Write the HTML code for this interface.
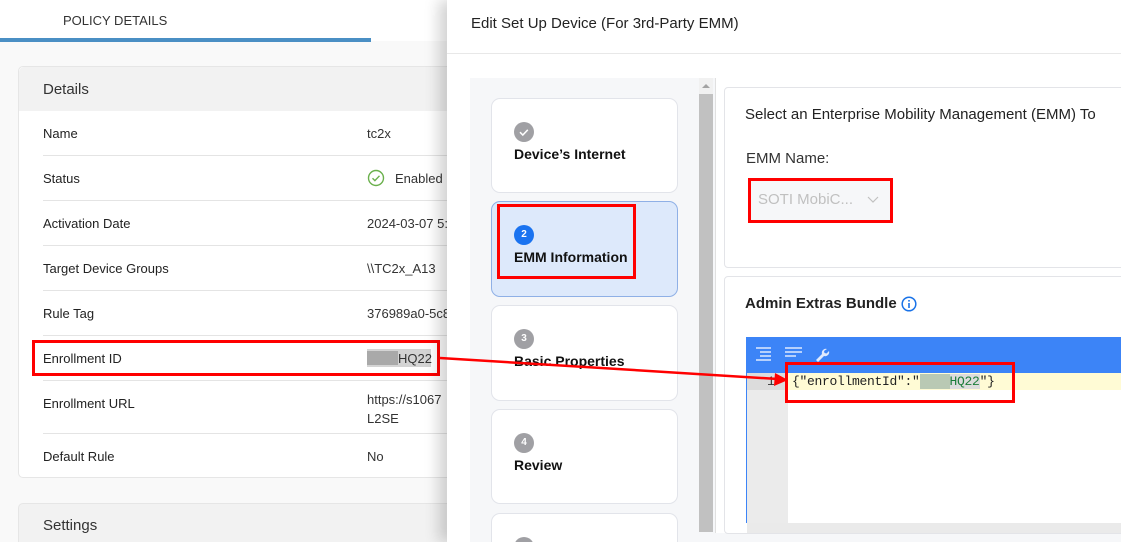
<!DOCTYPE html>
<html style="width:1121px;height:542px;overflow:hidden"><head><style>
*{margin:0;padding:0;box-sizing:border-box}
body{width:1121px;height:542px;overflow:hidden;position:relative;background:#f9f9f9;font-family:"Liberation Sans",sans-serif;color:#222}
.a{position:absolute}
.lab{position:absolute;left:43px;font-size:13px;color:#222}
.val{position:absolute;left:367px;font-size:13px;color:#333}
.sep{position:absolute;left:43px;width:404px;height:1px;background:#e4e4e4}
.step{position:absolute;left:491px;width:187px;background:#fff;border:1px solid #e2e4ea;border-radius:9px}
.num{position:absolute;left:22px;width:20px;height:20px;border-radius:50%;background:#a0a0a4;color:#fff;font-size:10px;font-weight:bold;text-align:center;line-height:20px}
.st{position:absolute;left:22px;font-size:14px;font-weight:bold;color:#111;white-space:nowrap}
.red{position:absolute;border:3px solid #f00}
</style></head><body>
<div class="a" style="left:0;top:0;width:447px;height:41px;background:#fff"></div>
<div class="a" style="left:63px;top:13px;font-size:13px;color:#333">POLICY DETAILS</div>
<div class="a" style="left:0;top:38px;width:371px;height:4px;background:#4a8fc4"></div>

<div class="a" style="left:18px;top:66px;width:440px;height:412px;background:#fff;border:1px solid #e6e6e6;border-radius:5px"></div>
<div class="a" style="left:19px;top:67px;width:438px;height:44px;background:#f2f2f2;border-radius:5px 5px 0 0"></div>
<div class="a" style="left:43px;top:81px;font-size:15px;color:#333">Details</div>
<div class="lab" style="top:126px">Name</div><div class="val" style="top:126px">tc2x</div>
<div class="sep" style="top:155px"></div>
<div class="lab" style="top:171px">Status</div>
<svg class="a" style="left:367px;top:169px" width="18" height="18"><circle cx="9" cy="9" r="7.5" fill="none" stroke="#6ab04c" stroke-width="1.4"/><path d="M5.5 9.2l2.4 2.4 4.6-4.8" fill="none" stroke="#6ab04c" stroke-width="1.4"/></svg>
<div class="val" style="top:171px;left:395px">Enabled</div>
<div class="sep" style="top:200px"></div>
<div class="lab" style="top:216px">Activation Date</div><div class="val" style="top:216px">2024-03-07 5:5</div>
<div class="sep" style="top:245px"></div>
<div class="lab" style="top:261px">Target Device Groups</div><div class="val" style="top:261px">\\TC2x_A13</div>
<div class="sep" style="top:290px"></div>
<div class="lab" style="top:306px">Rule Tag</div><div class="val" style="top:306px">376989a0-5c8</div>
<div class="sep" style="top:335px"></div>
<div class="lab" style="top:351px">Enrollment ID</div>
<div class="a" style="left:367px;top:349px;width:64px;height:18px;background:#d4d4d4"></div>
<div class="a" style="left:367px;top:351px;width:31px;height:14px;background:#a9a9a9"></div>
<div class="val" style="top:351px;left:398px">HQ22</div>
<div class="sep" style="top:380px"></div>
<div class="lab" style="top:396px">Enrollment URL</div><div class="val" style="top:390px;line-height:19px">https://s1067<br>L2SE</div>
<div class="sep" style="top:433px"></div>
<div class="lab" style="top:449px">Default Rule</div><div class="val" style="top:449px">No</div>
<div class="red" style="left:32px;top:340px;width:408px;height:36px"></div>

<div class="a" style="left:18px;top:503px;width:440px;height:39px;background:#f2f2f2;border:1px solid #e6e6e6;border-bottom:none;border-radius:5px 5px 0 0"></div>
<div class="a" style="left:43px;top:517px;font-size:15px;color:#333">Settings</div>

<div class="a" style="left:447px;top:0;width:674px;height:542px;background:#fff;box-shadow:-8px 0 14px rgba(0,0,0,.18)"></div>
<div class="a" style="left:471px;top:15px;font-size:15px;color:#222">Edit Set Up Device (For 3rd-Party EMM)</div>
<div class="a" style="left:447px;top:53px;width:674px;height:1px;background:#e8e8e8"></div>
<div class="a" style="left:470px;top:78px;width:651px;height:464px;background:#f6f7f9"></div>

<div class="step" style="top:98px;height:95px"><svg class="a" style="left:22px;top:23px" width="20" height="20"><circle cx="10" cy="10" r="10" fill="#a0a0a4"/><path d="M6 10.2l2.8 2.8 5-5.2" fill="none" stroke="#fff" stroke-width="1.5"/></svg><div class="st" style="top:47px">Device’s Internet</div></div>
<div class="step" style="top:201px;height:96px;background:#dde9fb;border-color:#8fb0e6"><div class="num" style="top:23px;background:#1a73f0">2</div><div class="st" style="top:47px">EMM Information</div></div>
<div class="step" style="top:305px;height:96px"><div class="num" style="top:23px">3</div><div class="st" style="top:47px">Basic Properties</div></div>
<div class="step" style="top:409px;height:95px"><div class="num" style="top:23px">4</div><div class="st" style="top:47px">Review</div></div>
<div class="step" style="top:513px;height:29px;border-bottom:none;border-radius:9px 9px 0 0;overflow:hidden"><div class="num" style="top:23px">5</div></div>
<div class="red" style="left:497px;top:204px;width:139px;height:75px"></div>

<div class="a" style="left:699px;top:78px;width:14px;height:454px;background:#c1c1c1"></div>
<div class="a" style="left:699px;top:78px;width:14px;height:16px;background:#f1f1f1"></div>
<div class="a" style="left:702px;top:84px;width:0;height:0;border-left:4px solid transparent;border-right:4px solid transparent;border-bottom:4px solid #a3a3a3"></div>
<div class="a" style="left:715px;top:78px;width:406px;height:455px;background:#fff;border-left:1px solid #e0e0e0"></div>

<div class="a" style="left:724px;top:87px;width:410px;height:181px;background:#fff;border:1px solid #e3e4e8;border-radius:4px"></div>
<div class="a" style="left:745px;top:106px;font-size:15px;color:#222;white-space:nowrap">Select an Enterprise Mobility Management (EMM) To</div>
<div class="a" style="left:746px;top:150px;font-size:15px;color:#333">EMM Name:</div>
<div class="a" style="left:751px;top:181px;width:139px;height:39px;background:#f6f7f9"></div>
<div class="a" style="left:758px;top:191px;font-size:15px;color:#c0c0c0">SOTI MobiC...</div>
<svg class="a" style="left:867px;top:195px" width="12" height="10"><path d="M1 2l5 5 5-5" fill="none" stroke="#c0c0c0" stroke-width="1.2"/></svg>
<div class="red" style="left:748px;top:178px;width:145px;height:45px"></div>

<div class="a" style="left:724px;top:276px;width:410px;height:258px;background:#fff;border:1px solid #e3e4e8;border-radius:4px"></div>
<div class="a" style="left:745px;top:295px;font-size:15px;color:#222;font-weight:bold">Admin Extras Bundle</div>
<svg class="a" style="left:901px;top:296px" width="16" height="16"><circle cx="8" cy="8" r="6.8" fill="none" stroke="#1a73e8" stroke-width="1.5"/><rect x="7.2" y="7" width="1.6" height="5" fill="#1a73e8"/><rect x="7.2" y="4" width="1.6" height="1.6" fill="#1a73e8"/></svg>

<div class="a" style="left:746px;top:337px;width:375px;height:36px;background:#3c84f7"></div>
<svg class="a" style="left:755px;top:346px" width="80" height="18"><g stroke="#dfe9fd" stroke-width="1.6"><path d="M1 2h15M5 6h11M5 10h11M1 14h15"/><path d="M30 2h17M30 6h17M30 10h11"/></g><path d="M72 3a4 4 0 0 0-5 5l-6 6 2 2 6-6a4 4 0 0 0 5-5l-2.5 2.5-2-0.5-0.5-2z" fill="#dfe9fd"/></svg>
<div class="a" style="left:746px;top:373px;width:375px;height:150px;background:#fff;border-left:1px solid #3c84f7"></div>
<div class="a" style="left:747px;top:373px;width:41px;height:150px;background:#ebebeb"></div>
<div class="a" style="left:788px;top:373px;width:333px;height:17px;background:#fffbd5"></div>
<div class="a" style="left:747px;top:373px;width:41px;height:17px;background:#dcdcdc"></div>
<div class="a" style="left:767px;top:374px;font-family:'Liberation Mono',monospace;font-size:13px;color:#333">1</div>
<div class="a" style="left:792px;top:374px;font-family:'Liberation Mono',monospace;font-size:13px;color:#222;white-space:pre;letter-spacing:-0.3px">{"enrollmentId":"<span style="background:#b9c9b4;color:transparent">xxxx</span><span style="color:#1c7d3a;background:#dcdcdc">HQ22</span>"}</div>
<div class="a" style="left:747px;top:523px;width:374px;height:10px;background:#eaeaea"></div>
<div class="red" style="left:785px;top:362px;width:230px;height:41px"></div>

<svg class="a" style="left:0;top:0" width="1121" height="542"><line x1="440" y1="358" x2="778" y2="379" stroke="#f00" stroke-width="2.5"/><path d="M788 380l-13 -7 -1 13z" fill="#f00"/></svg>
</body></html>
